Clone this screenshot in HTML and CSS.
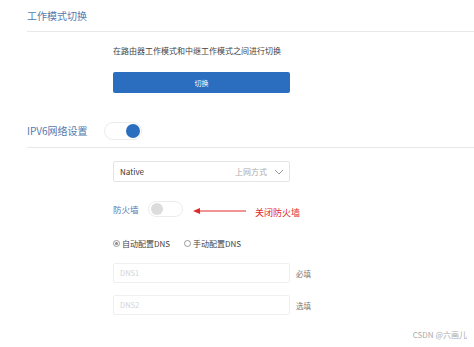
FILE: index.html
```html
<!DOCTYPE html>
<html lang="zh-CN">
<head>
    <meta charset="UTF-8">
    <title>IPV6网络设置</title>
    <link rel="stylesheet" href="styles.css">
</head>
<body>
    <div class="page">
        <div class="head">
            <span class="title">工作模式切换</span>
        </div>
        <div class="desc">在路由器工作模式和中继工作模式之间进行切换</div>
        <button class="btn">切换</button>

        <div class="head head-ipv6">
            <span class="title">IPV6网络设置</span>
            <span class="switch on"><span class="knob"></span></span>
        </div>

        <div class="select">
            <span class="select-value">Native</span>
            <span class="select-label">上网方式</span>
            <svg class="chevron" width="10" height="6" viewBox="0 0 10 6"><path d="M1 1 L5 5 L9 1" fill="none" stroke="#999" stroke-width="1"/></svg>
        </div>

        <div class="fw-row">
            <span class="fw-label">防火墙</span>
            <span class="switch off"><span class="knob"></span></span>
            <svg class="arrow" width="54" height="8" viewBox="0 0 54 8"><path d="M6 4 L53 4" stroke="#e02828" stroke-width="1"/><path d="M0 4 L7 1 L7 7 Z" fill="#e02828"/></svg>
            <span class="note">关闭防火墙</span>
        </div>

        <div class="radio-row">
            <span class="radio checked"></span><span class="radio-text">自动配置DNS</span>
            <span class="radio"></span><span class="radio-text">手动配置DNS</span>
        </div>

        <div class="field">
            <div class="input">DNS1</div>
            <span class="hint">必填</span>
        </div>
        <div class="field field-2">
            <div class="input">DNS2</div>
            <span class="hint">选填</span>
        </div>
    </div>
    <div class="watermark">CSDN @六画儿</div>
</body>
</html>
```

FILE: styles.css
```css
body {
    margin: 0;
    background: #fff;
    font-family: "Noto Sans CJK SC", "Liberation Sans", sans-serif;
    color: #555;
}
.page {
    width: 474px;
}
.head {
    margin-left: 27px;
    height: 31px;
    border-bottom: 1px solid #e8e8e8;
    display: flex;
    align-items: center;
}
.title {
    font-size: 10px;
    line-height: 14px;
    color: #5479ae;
}
.desc {
    margin: 12px 0 0 113px;
    font-size: 8px;
    line-height: 14px;
    color: #444;
}
.btn {
    display: block;
    margin: 14px 0 0 113px;
    width: 177px;
    height: 21px;
    padding: 0;
    border: none;
    border-radius: 2px;
    background: #2b6dbf;
    color: #fff;
    font-family: inherit;
    font-size: 7px;
}
.head-ipv6 {
    margin-top: 21px;
    height: 33px;
}
.head-ipv6 .switch {
    margin-left: 16px;
}
.switch {
    box-sizing: border-box;
    width: 38px;
    height: 18px;
    border: 1px solid #ececec;
    border-radius: 9px;
    background: #fff;
    display: flex;
    align-items: center;
    padding: 0 1px;
}
.switch.on {
    justify-content: flex-end;
}
.switch .knob {
    width: 14px;
    height: 14px;
    border-radius: 50%;
    background: #2b6dbf;
}
.switch.off {
    width: 35px;
    height: 16px;
    padding: 0 2px;
}
.switch.off .knob {
    width: 12px;
    height: 12px;
    background: #dcdcdc;
}
.select {
    box-sizing: border-box;
    margin: 13px 0 0 113px;
    width: 177px;
    height: 21px;
    border: 1px solid #e4e4e4;
    border-radius: 2px;
    display: flex;
    align-items: center;
    padding: 0 5px 0 6px;
    font-size: 8px;
}
.select-value {
    color: #333;
    flex: 1;
}
.select-label {
    color: #aaa;
    margin-right: 7px;
}
.fw-row {
    margin: 18px 0 0 113px;
    height: 18px;
    display: flex;
    align-items: center;
}
.fw-label {
    font-size: 8.5px;
    color: #5479ae;
    width: 35px;
}
.arrow {
    margin-left: 10px;
    margin-top: 4px;
}
.note {
    margin-left: 8px;
    margin-top: 7px;
    font-size: 9px;
    color: #e02828;
}
.radio-row {
    margin: 18px 0 0 113px;
    height: 14px;
    display: flex;
    align-items: center;
    font-size: 8px;
    color: #444;
}
.radio {
    box-sizing: border-box;
    width: 7px;
    height: 7px;
    border: 1px solid #999;
    border-radius: 50%;
    margin-right: 2px;
    display: flex;
    align-items: center;
    justify-content: center;
}
.radio.checked::after {
    content: "";
    width: 3px;
    height: 3px;
    border-radius: 50%;
    background: #888;
}
.radio-text {
    margin-right: 14px;
}
.field {
    margin: 13px 0 0 113px;
    display: flex;
    align-items: center;
}
.field-2 {
    margin-top: 12px;
}
.input {
    box-sizing: border-box;
    width: 177px;
    height: 20px;
    border: 1px solid #f0f0f0;
    border-radius: 2px;
    padding: 0 6px;
    font-size: 7.5px;
    line-height: 18px;
    color: #d4d4d4;
}
.hint {
    margin-left: 6px;
    font-size: 7.5px;
    color: #777;
}
.watermark {
    position: absolute;
    right: 7px;
    bottom: 7px;
    font-size: 8px;
    color: #aaa;
}
```
